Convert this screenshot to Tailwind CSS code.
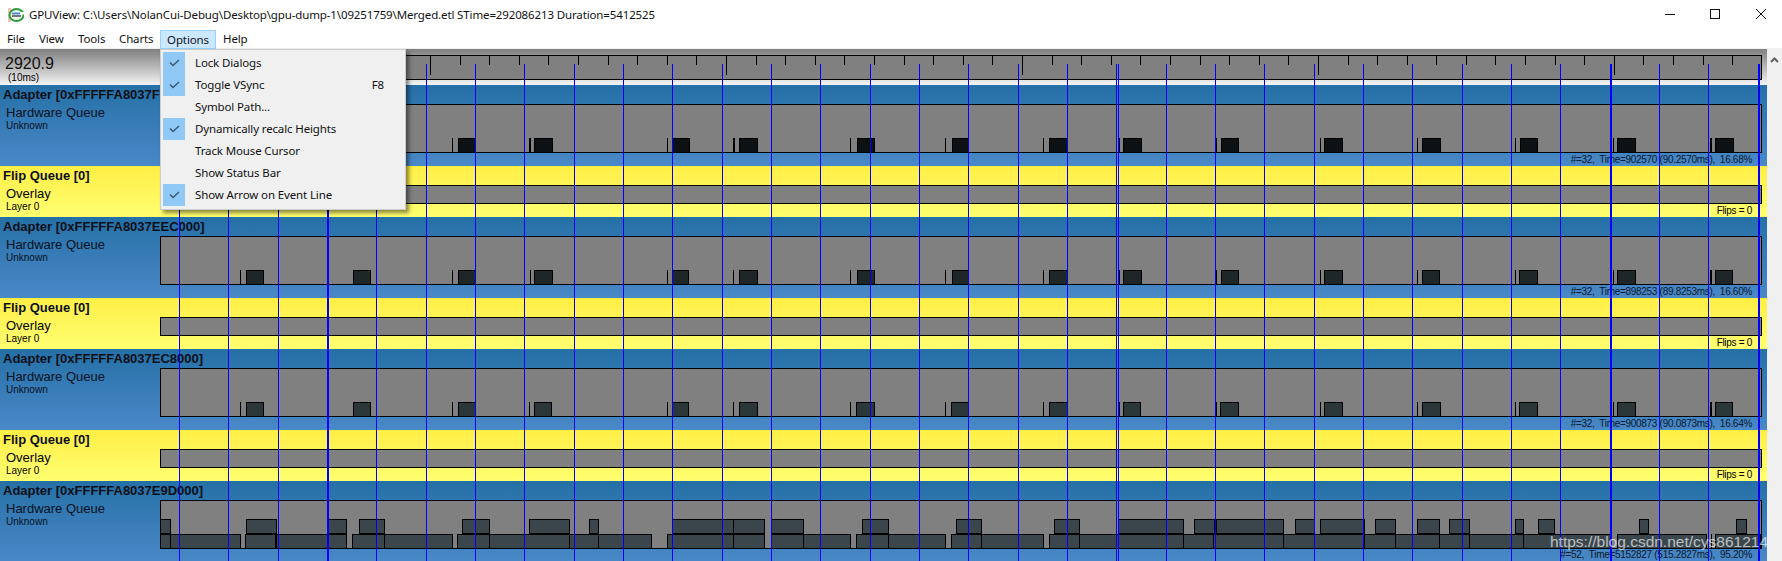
<!DOCTYPE html>
<html lang="en">
<head>
<meta charset="utf-8">
<title>GPUView</title>
<script src="https://cdn.jsdelivr.net/npm/@tailwindcss/browser@4"></script>
</head>
<body class="bg-white">
<div class="relative w-[1782px] h-[561px] overflow-hidden flex flex-col font-['Liberation_Sans',sans-serif] text-black">

  <!-- Title bar -->
  <header class="h-[29px] flex items-center shrink-0 font-['Noto_Sans',sans-serif] text-[11.5px] tracking-[-0.13px] text-[#111]">
    <svg class="ml-[8px] mr-[5px]" width="16" height="16" viewBox="0 0 16 16">
      <rect x="0" y="1" width="3" height="14" fill="#f6c0b4"/>
      <ellipse cx="8.5" cy="8" rx="7" ry="6" fill="#eef6ee" stroke="#2f9a3e" stroke-width="2"/>
      <rect x="4" y="5.5" width="8" height="2" fill="#4f8fd0"/>
      <rect x="4" y="8" width="9" height="2" fill="#7a7a7a"/>
      <rect x="13" y="5" width="3" height="2.5" fill="#ffffff"/>
    </svg>
    <span class="whitespace-nowrap">GPUView: C:\Users\NolanCui-Debug\Desktop\gpu-dump-1\09251759\Merged.etl STime=292086213 Duration=5412525</span>
    <div class="ml-auto flex items-center h-full">
      <svg width="137" height="29" viewBox="1645 0 137 29" fill="none" stroke="#111" stroke-width="1" shape-rendering="crispEdges">
        <path d="M1665 14.5H1675"/>
        <rect x="1710.5" y="9.5" width="9" height="9"/>
        <path d="M1756 9L1766 19M1766 9L1756 19" shape-rendering="auto"/>
      </svg>
    </div>
  </header>

  <!-- Menu bar -->
  <nav class="h-[20px] shrink-0 flex items-start pl-[1px] border-b border-[#f0f0f0] font-['Noto_Sans',sans-serif] text-[11.5px] tracking-[-0.13px] text-[#111]">
    <span class="h-[19px] w-[32px] flex items-center pl-[6px]">File</span>
    <span class="h-[19px] w-[39px] flex items-center pl-[6px]">View</span>
    <span class="h-[19px] w-[41px] flex items-center pl-[6px]">Tools</span>
    <span class="h-[19px] w-[47px] flex items-center pl-[6px]">Charts</span>
    <span class="h-[19px] w-[56px] mt-[1px] flex items-center justify-center bg-[#cce8ff] border border-[#99d1ff]">Options</span>
    <span class="h-[19px] flex items-center pl-[7px]">Help</span>
  </nav>

  <div class="flex flex-1 min-h-0">
    <main class="w-[1767px] flex flex-col">

      <!-- Ruler -->
      <section class="h-[36px] shrink-0 flex bg-linear-to-b from-[#808080] to-[#f4f4f4]">
        <div class="w-[160px] pl-[5px] pt-[5px]">
          <div class="text-[16px] leading-[19px] text-[#111]">2920.9</div>
          <div class="text-[10px] leading-[9px] pl-[3px]">(10ms)</div>
        </div>
        <svg class="mt-[6px]" width="1602" height="25" viewBox="160 0 1602 25" fill="none" stroke="#000" shape-rendering="crispEdges">
          <rect x="160.5" y=".5" width="1601" height="24" fill="#808080"/>
          <path d="M460.5 0V10M489.5 0V10M519.5 0V10M548.5 0V10M578.5 0V10M608.5 0V10M637.5 0V10M667.5 0V10M696.5 0V10M756.5 0V10M785.5 0V10M815.5 0V10M844.5 0V10M874.5 0V10M904.5 0V10M933.5 0V10M963.5 0V10M992.5 0V10M1052.5 0V10M1081.5 0V10M1111.5 0V10M1140.5 0V10M1170.5 0V10M1200.5 0V10M1229.5 0V10M1259.5 0V10M1288.5 0V10M1348.5 0V10M1377.5 0V10M1407.5 0V10M1436.5 0V10M1466.5 0V10M1495.5 0V10M1525.5 0V10M1555.5 0V10M1584.5 0V10M1643.5 0V10M1673.5 0V10M1703.5 0V10M1732.5 0V10"/>
          <path d="M430.5 0V20M726.5 0V20M1022.5 0V20M1318.5 0V20M1614.5 0V20"/>
        </svg>
      </section>

      <!-- Adapter 1 -->
      <section class="h-[81px] shrink-0 flex flex-col bg-linear-to-b from-[#2470a6] to-[#4a88c8]">
        <h2 class="h-[19px] pl-[3px] font-bold text-[13px] leading-[19px] whitespace-nowrap text-[#0a0f18]">Adapter [0xFFFFFA8037F</h2>
        <div class="flex h-[49px]">
          <div class="w-[160px] pl-[6px] pt-[1px]">
            <div class="text-[13px] leading-[16px] text-[#081222]">Hardware Queue</div>
            <div class="text-[10px] leading-[10px] text-[#081222]">Unknown</div>
          </div>
          <svg width="1602" height="49" viewBox="160 0 1602 49" shape-rendering="crispEdges">
            <rect x="160.5" y=".5" width="1601" height="48" fill="#808080" stroke="#000"/>
            <g fill="#0d1114" stroke="#000">
              <rect x="458.5" y="34.5" width="17" height="14"/><rect x="534.5" y="34.5" width="18" height="14"/><rect x="672.5" y="34.5" width="17" height="14"/><rect x="739.5" y="34.5" width="18" height="14"/><rect x="857.5" y="34.5" width="17" height="14"/><rect x="952.5" y="34.5" width="16" height="14"/><rect x="1049.5" y="34.5" width="18" height="14"/><rect x="1123.5" y="34.5" width="18" height="14"/><rect x="1221.5" y="34.5" width="17" height="14"/><rect x="1324.5" y="34.5" width="18" height="14"/><rect x="1422.5" y="34.5" width="18" height="14"/><rect x="1520.5" y="34.5" width="17" height="14"/><rect x="1617.5" y="34.5" width="18" height="14"/><rect x="1715.5" y="34.5" width="18" height="14"/>
              <path d="M452.5 34V48M529.5 34V48M530.5 34V48M667.5 34V48M733.5 34V48M734.5 34V48M850.5 34V48M945.5 34V48M1043.5 34V48M1119.5 34V48M1216.5 34V48M1320.5 34V48M1417.5 34V48M1515.5 34V48M1613.5 34V48M1710.5 34V48M1711.5 34V48"/>
            </g>
          </svg>
        </div>
        <div class="h-[13px] pr-[15px] text-right text-[10px] tracking-[-0.3px] leading-[13px] whitespace-pre text-[#0a1a2c]">#=32,  Time=902570 (90.2570ms),  16.68%</div>
      </section>

      <!-- Flip 1 -->
      <section class="h-[51px] shrink-0 flex flex-col bg-linear-to-b from-[#ffee44] to-[#ffff70]">
        <h2 class="h-[19px] pl-[3px] font-bold text-[13px] leading-[19px] whitespace-nowrap text-[#0a0f18]">Flip Queue [0]</h2>
        <div class="flex h-[19px]">
          <div class="w-[160px] pl-[6px] pt-[1px] h-[32px] shrink-0">
            <div class="text-[13px] leading-[16px]">Overlay</div>
            <div class="text-[10px] leading-[10px]">Layer 0</div>
          </div>
          <svg width="1602" height="19" viewBox="160 0 1602 19" shape-rendering="crispEdges"><rect x="160.5" y=".5" width="1601" height="18" fill="#808080" stroke="#000"/></svg>
        </div>
        <div class="h-[13px] pr-[15px] text-right text-[10px] tracking-[-0.3px] leading-[13px] whitespace-pre">Flips = 0</div>
      </section>

      <!-- Adapter 2 -->
      <section class="h-[81px] shrink-0 flex flex-col bg-linear-to-b from-[#2470a6] to-[#4a88c8]">
        <h2 class="h-[19px] pl-[3px] font-bold text-[13px] leading-[19px] whitespace-nowrap text-[#0a0f18]">Adapter [0xFFFFFA8037EEC000]</h2>
        <div class="flex h-[49px]">
          <div class="w-[160px] pl-[6px] pt-[1px]">
            <div class="text-[13px] leading-[16px] text-[#081222]">Hardware Queue</div>
            <div class="text-[10px] leading-[10px] text-[#081222]">Unknown</div>
          </div>
          <svg width="1602" height="49" viewBox="160 0 1602 49" shape-rendering="crispEdges">
            <rect x="160.5" y=".5" width="1601" height="48" fill="#808080" stroke="#000"/>
            <g fill="#1f2628" stroke="#000">
              <rect x="246.5" y="34.5" width="17" height="14"/><rect x="353.5" y="34.5" width="17" height="14"/><rect x="458.5" y="34.5" width="17" height="14"/><rect x="534.5" y="34.5" width="18" height="14"/><rect x="672.5" y="34.5" width="16" height="14"/><rect x="739.5" y="34.5" width="18" height="14"/><rect x="857.5" y="34.5" width="17" height="14"/><rect x="952.5" y="34.5" width="16" height="14"/><rect x="1049.5" y="34.5" width="18" height="14"/><rect x="1123.5" y="34.5" width="18" height="14"/><rect x="1221.5" y="34.5" width="17" height="14"/><rect x="1324.5" y="34.5" width="18" height="14"/><rect x="1422.5" y="34.5" width="17" height="14"/><rect x="1519.5" y="34.5" width="18" height="14"/><rect x="1617.5" y="34.5" width="18" height="14"/><rect x="1715.5" y="34.5" width="17" height="14"/>
              <path d="M240.5 34V48M452.5 34V48M530.5 34V48M667.5 34V48M733.5 34V48M850.5 34V48M945.5 34V48M1043.5 34V48M1119.5 34V48M1216.5 34V48M1320.5 34V48M1417.5 34V48M1515.5 34V48M1613.5 34V48M1710.5 34V48M1711.5 34V48"/>
            </g>
          </svg>
        </div>
        <div class="h-[13px] pr-[15px] text-right text-[10px] tracking-[-0.3px] leading-[13px] whitespace-pre text-[#0a1a2c]">#=32,  Time=898253 (89.8253ms),  16.60%</div>
      </section>

      <!-- Flip 2 -->
      <section class="h-[51px] shrink-0 flex flex-col bg-linear-to-b from-[#ffee44] to-[#ffff70]">
        <h2 class="h-[19px] pl-[3px] font-bold text-[13px] leading-[19px] whitespace-nowrap text-[#0a0f18]">Flip Queue [0]</h2>
        <div class="flex h-[19px]">
          <div class="w-[160px] pl-[6px] pt-[1px] h-[32px] shrink-0">
            <div class="text-[13px] leading-[16px]">Overlay</div>
            <div class="text-[10px] leading-[10px]">Layer 0</div>
          </div>
          <svg width="1602" height="19" viewBox="160 0 1602 19" shape-rendering="crispEdges"><rect x="160.5" y=".5" width="1601" height="18" fill="#808080" stroke="#000"/></svg>
        </div>
        <div class="h-[13px] pr-[15px] text-right text-[10px] tracking-[-0.3px] leading-[13px] whitespace-pre">Flips = 0</div>
      </section>

      <!-- Adapter 3 -->
      <section class="h-[81px] shrink-0 flex flex-col bg-linear-to-b from-[#2470a6] to-[#4a88c8]">
        <h2 class="h-[19px] pl-[3px] font-bold text-[13px] leading-[19px] whitespace-nowrap text-[#0a0f18]">Adapter [0xFFFFFA8037EC8000]</h2>
        <div class="flex h-[49px]">
          <div class="w-[160px] pl-[6px] pt-[1px]">
            <div class="text-[13px] leading-[16px] text-[#081222]">Hardware Queue</div>
            <div class="text-[10px] leading-[10px] text-[#081222]">Unknown</div>
          </div>
          <svg width="1602" height="49" viewBox="160 0 1602 49" shape-rendering="crispEdges">
            <rect x="160.5" y=".5" width="1601" height="48" fill="#808080" stroke="#000"/>
            <g fill="#2c373a" stroke="#000">
              <rect x="246.5" y="34.5" width="17" height="14"/><rect x="353.5" y="34.5" width="17" height="14"/><rect x="458.5" y="34.5" width="17" height="14"/><rect x="534.5" y="34.5" width="17" height="14"/><rect x="672.5" y="34.5" width="16" height="14"/><rect x="739.5" y="34.5" width="18" height="14"/><rect x="856.5" y="34.5" width="18" height="14"/><rect x="951.5" y="34.5" width="17" height="14"/><rect x="1049.5" y="34.5" width="18" height="14"/><rect x="1123.5" y="34.5" width="17" height="14"/><rect x="1220.5" y="34.5" width="18" height="14"/><rect x="1324.5" y="34.5" width="18" height="14"/><rect x="1422.5" y="34.5" width="18" height="14"/><rect x="1519.5" y="34.5" width="18" height="14"/><rect x="1617.5" y="34.5" width="18" height="14"/><rect x="1715.5" y="34.5" width="17" height="14"/>
              <path d="M240.5 34V48M452.5 34V48M529.5 34V48M667.5 34V48M733.5 34V48M850.5 34V48M945.5 34V48M1043.5 34V48M1119.5 34V48M1216.5 34V48M1320.5 34V48M1417.5 34V48M1515.5 34V48M1613.5 34V48M1710.5 34V48M1711.5 34V48"/>
            </g>
          </svg>
        </div>
        <div class="h-[13px] pr-[15px] text-right text-[10px] tracking-[-0.3px] leading-[13px] whitespace-pre text-[#0a1a2c]">#=32,  Time=900873 (90.0873ms),  16.64%</div>
      </section>

      <!-- Flip 3 -->
      <section class="h-[51px] shrink-0 flex flex-col bg-linear-to-b from-[#ffee44] to-[#ffff70]">
        <h2 class="h-[19px] pl-[3px] font-bold text-[13px] leading-[19px] whitespace-nowrap text-[#0a0f18]">Flip Queue [0]</h2>
        <div class="flex h-[19px]">
          <div class="w-[160px] pl-[6px] pt-[1px] h-[32px] shrink-0">
            <div class="text-[13px] leading-[16px]">Overlay</div>
            <div class="text-[10px] leading-[10px]">Layer 0</div>
          </div>
          <svg width="1602" height="19" viewBox="160 0 1602 19" shape-rendering="crispEdges"><rect x="160.5" y=".5" width="1601" height="18" fill="#808080" stroke="#000"/></svg>
        </div>
        <div class="h-[13px] pr-[15px] text-right text-[10px] tracking-[-0.3px] leading-[13px] whitespace-pre">Flips = 0</div>
      </section>

      <!-- Adapter 4 -->
      <section class="h-[81px] shrink-0 flex flex-col bg-linear-to-b from-[#2470a6] to-[#4a88c8]">
        <h2 class="h-[19px] pl-[3px] font-bold text-[13px] leading-[19px] whitespace-nowrap text-[#0a0f18]">Adapter [0xFFFFFA8037E9D000]</h2>
        <div class="flex h-[49px]">
          <div class="w-[160px] pl-[6px] pt-[1px]">
            <div class="text-[13px] leading-[16px] text-[#081222]">Hardware Queue</div>
            <div class="text-[10px] leading-[10px] text-[#081222]">Unknown</div>
          </div>
          <svg width="1602" height="49" viewBox="160 0 1602 49" shape-rendering="crispEdges">
            <rect x="160.5" y=".5" width="1601" height="48" fill="#808080" stroke="#000"/>
            <g fill="#3a464c" stroke="#000">
              <!-- upper lane -->
              <rect x="160.5" y="19.5" width="10" height="14"/><rect x="246.5" y="19.5" width="30" height="14"/><rect x="328.5" y="19.5" width="18" height="14"/><rect x="359.5" y="19.5" width="25" height="14"/><rect x="462.5" y="19.5" width="27" height="14"/><rect x="529.5" y="19.5" width="40" height="14"/><rect x="589.5" y="19.5" width="9" height="14"/><rect x="672.5" y="19.5" width="61" height="14"/><rect x="733.5" y="19.5" width="31" height="14"/><rect x="771.5" y="19.5" width="32" height="14"/><rect x="862.5" y="19.5" width="26" height="14"/><rect x="956.5" y="19.5" width="25" height="14"/><rect x="1054.5" y="19.5" width="25" height="14"/><rect x="1118.5" y="19.5" width="65" height="14"/><rect x="1194.5" y="19.5" width="20" height="14"/><rect x="1216.5" y="19.5" width="67" height="14"/><rect x="1295.5" y="19.5" width="19" height="14"/><rect x="1320.5" y="19.5" width="44" height="14"/><rect x="1375.5" y="19.5" width="20" height="14"/><rect x="1417.5" y="19.5" width="22" height="14"/><rect x="1449.5" y="19.5" width="20" height="14"/><rect x="1515.5" y="19.5" width="8" height="14"/><rect x="1538.5" y="19.5" width="16" height="14"/><rect x="1639.5" y="19.5" width="9" height="14"/><rect x="1736.5" y="19.5" width="10" height="14"/>
              <!-- lower lane -->
              <rect x="160.5" y="34.5" width="10" height="14"/><rect x="170.5" y="34.5" width="70" height="14"/><rect x="245.5" y="34.5" width="30" height="14"/><rect x="276.5" y="34.5" width="70" height="14"/><rect x="352.5" y="34.5" width="32" height="14"/><rect x="384.5" y="34.5" width="68" height="14"/><rect x="457.5" y="34.5" width="32" height="14"/><rect x="489.5" y="34.5" width="80" height="14"/><rect x="569.5" y="34.5" width="29" height="14"/><rect x="598.5" y="34.5" width="53" height="14"/><rect x="667.5" y="34.5" width="66" height="14"/><rect x="733.5" y="34.5" width="31" height="14"/><rect x="771.5" y="34.5" width="32" height="14"/><rect x="803.5" y="34.5" width="47" height="14"/><rect x="856.5" y="34.5" width="32" height="14"/><rect x="888.5" y="34.5" width="57" height="14"/><rect x="951.5" y="34.5" width="30" height="14"/><rect x="981.5" y="34.5" width="62" height="14"/><rect x="1049.5" y="34.5" width="30" height="14"/><rect x="1079.5" y="34.5" width="104" height="14"/><rect x="1183.5" y="34.5" width="30" height="14"/><rect x="1213.5" y="34.5" width="70" height="14"/><rect x="1283.5" y="34.5" width="81" height="14"/><rect x="1364.5" y="34.5" width="31" height="14"/><rect x="1395.5" y="34.5" width="44" height="14"/><rect x="1439.5" y="34.5" width="30" height="14"/><rect x="1469.5" y="34.5" width="54" height="14"/><rect x="1523.5" y="34.5" width="87" height="14"/><rect x="1617.5" y="34.5" width="89" height="14"/><rect x="1715.5" y="34.5" width="45" height="14"/>
              <path d="M1711.5 34V48"/>
            </g>
          </svg>
        </div>
        <div class="h-[12px] pr-[15px] text-right text-[10px] tracking-[-0.3px] leading-[12px] whitespace-pre text-[#0a1a2c]">#=52,  Time=5152827 (515.2827ms),  95.20%</div>
      </section>
    </main>

    <!-- Scrollbar -->
    <aside class="w-[15px] bg-[#f0f0f0] flex justify-center pt-[7px]">
      <svg width="9" height="7" viewBox="0 0 9 7" fill="none" stroke="#606060" stroke-width="2"><path d="M1 6L4.5 2.5L8 6"/></svg>
    </aside>
  </div>

  <!-- Event lines overlay -->
  <svg class="absolute left-0 top-[64px] pointer-events-none" width="1767" height="497" viewBox="0 0 1767 497" stroke="#0000ff" shape-rendering="crispEdges">
    <path d="M179.5 0V497M228.5 0V497M278.5 0V497M376.5 0V497M426.5 0V497M475.5 0V497M524.5 0V497M574.5 0V497M623.5 0V497M672.5 0V497M722.5 0V497M771.5 0V497M820.5 0V497M870.5 0V497M919.5 0V497M968.5 0V497M1018.5 0V497M1067.5 0V497M1116.5 0V497M1118.5 0V497M1166.5 0V497M1215.5 0V497M1264.5 0V497M1314.5 0V497M1363.5 0V497M1412.5 0V497M1462.5 0V497M1511.5 0V497M1560.5 0V497M1659.5 0V497M1708.5 0V497"/>
    <path stroke-width="2" d="M328 0V497M1611 0V497M1759 0V497"/>
  </svg>

  <!-- Options menu -->
  <div class="absolute left-[160px] top-[49px] w-[246px] h-[161px] bg-[#f0f0f0] border border-[#cccccc] shadow-[3px_3px_4px_rgba(0,0,0,0.45)] pt-[2px] pl-[2px] font-['Noto_Sans',sans-serif] text-[11.5px] tracking-[-0.13px] text-[#111]">
    <div class="h-[22px] flex items-center">
      <span class="w-[22px] h-[22px] flex items-center justify-center bg-[#90c8f6]"><svg width="11" height="8" viewBox="0 0 11 8" fill="none" stroke="#3c5a72" stroke-width="1.5"><path d="M1 3.5L4 6.5L10 1"/></svg></span>
      <span class="ml-[10px]">Lock Dialogs</span>
    </div>
    <div class="h-[22px] flex items-center">
      <span class="w-[22px] h-[22px] flex items-center justify-center bg-[#90c8f6]"><svg width="11" height="8" viewBox="0 0 11 8" fill="none" stroke="#3c5a72" stroke-width="1.5"><path d="M1 3.5L4 6.5L10 1"/></svg></span>
      <span class="ml-[10px]">Toggle VSync</span>
      <span class="ml-auto mr-[21px]">F8</span>
    </div>
    <div class="h-[22px] flex items-center">
      <span class="w-[22px] h-[22px]"></span>
      <span class="ml-[10px]">Symbol Path...</span>
    </div>
    <div class="h-[22px] flex items-center">
      <span class="w-[22px] h-[22px] flex items-center justify-center bg-[#90c8f6]"><svg width="11" height="8" viewBox="0 0 11 8" fill="none" stroke="#3c5a72" stroke-width="1.5"><path d="M1 3.5L4 6.5L10 1"/></svg></span>
      <span class="ml-[10px]">Dynamically recalc Heights</span>
    </div>
    <div class="h-[22px] flex items-center">
      <span class="w-[22px] h-[22px]"></span>
      <span class="ml-[10px]">Track Mouse Cursor</span>
    </div>
    <div class="h-[22px] flex items-center">
      <span class="w-[22px] h-[22px]"></span>
      <span class="ml-[10px]">Show Status Bar</span>
    </div>
    <div class="h-[22px] flex items-center">
      <span class="w-[22px] h-[22px] flex items-center justify-center bg-[#90c8f6]"><svg width="11" height="8" viewBox="0 0 11 8" fill="none" stroke="#3c5a72" stroke-width="1.5"><path d="M1 3.5L4 6.5L10 1"/></svg></span>
      <span class="ml-[10px]">Show Arrow on Event Line</span>
    </div>
  </div>

  <!-- Watermark -->
  <span class="absolute left-[1550px] top-[531px] text-[15.5px] leading-[21px] text-white/65 whitespace-nowrap">https://blog.csdn.net/cys861214</span>
</div>
</body>
</html>
